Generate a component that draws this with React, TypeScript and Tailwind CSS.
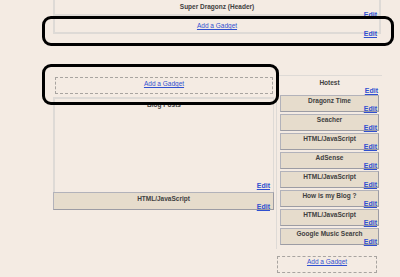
import React from "react";

const font = { fontFamily: '"Liberation Sans", Arial, sans-serif' };

function EditLink({ className = "" }: { className?: string }) {
  return (
    <span className={"text-[7px] leading-none text-[#2f4fd0] underline font-bold " + className}>Edit</span>
  );
}

function AddGadget({ className = "" }: { className?: string }) {
  return (
    <div className={"border border-dashed border-[#a8a4a0] flex justify-center " + className}>
      <span className="text-[6.5px] leading-none text-[#3050d0] underline">Add a Gadget</span>
    </div>
  );
}

function SideItem({ title }: { title: string }) {
  return (
    <div className="h-[17px] bg-[#e6dccc] border border-[#b2b2ba] border-r-[#9c9ca4] border-b-[#9c9ca4] flex flex-col items-center pt-[2px] relative">
      <span className="text-[6.5px] leading-none font-bold text-[#404040]">{title}</span>
      <div className="w-full flex justify-end pr-[1px] mt-auto">
        <EditLink />
      </div>
    </div>
  );
}

export default function App() {
  const items = [
    "Dragonz Time",
    "Seacher",
    "HTML/JavaScript",
    "AdSense",
    "HTML/JavaScript",
    "How is my Blog ?",
    "HTML/JavaScript",
    "Google Music Search",
  ];
  return (
    <div
      className="w-[400px] h-[277px] relative overflow-hidden bg-[#f4ebe3]"
      style={font}
    >
      {/* header */}
      <div className="ml-[53px] w-[328px] mt-[-2px] h-[18px] border-2 border-[#dedad6] flex flex-col items-center pt-[4px]">
        <span className="text-[6.5px] leading-none font-bold text-[#404040]">Super Dragonz (Header)</span>
        <div className="w-full flex justify-end pr-[2px] mt-auto">
          <EditLink />
        </div>
      </div>
      {/* add gadget header */}
      <div className="ml-[53px] w-[328px] mt-[1px] h-[17px] border-2 border-[#dedad6] flex flex-col items-center pt-[4px]">
        <span className="text-[6.5px] leading-none text-[#3050d0] underline">Add a Gadget</span>
        <div className="w-full flex justify-end pr-[2px] mt-auto">
          <EditLink />
        </div>
      </div>

      <div className="flex mt-[41px]">
        {/* left column */}
        <div className="ml-[53px] w-[221px] flex flex-col">
          <AddGadget className="ml-[2px] mr-[1px] mt-[2px] h-[17px] pt-[3px]" />
          <div className="mt-[3px] h-[95px] border-l-2 border-t-2 border-r border-[#dedad6] flex flex-col items-center pt-[3px]">
            <span className="text-[6.5px] leading-none font-bold text-[#404040]">Blog Posts</span>
            <div className="w-full flex justify-end pr-[3px] mt-auto pb-[3px]">
              <EditLink />
            </div>
          </div>
          <div className="h-[18px] bg-[#e6dccc] border border-[#b2b2ba] border-r-[#9c9ca4] border-b-[#9c9ca4] flex flex-col items-center pt-[3px]">
            <span className="text-[6.5px] leading-none font-bold text-[#404040]">HTML/JavaScript</span>
            <div className="w-full flex justify-end pr-[3px] mt-auto">
              <EditLink />
            </div>
          </div>
        </div>

        {/* right column */}
        <div className="w-[106px] ml-[2px] flex flex-col">
          <div className="border-l border-t border-[#dedad6] pl-[3px] pr-[3px] flex flex-col gap-[2px] pb-[4px]">
            <div className="h-[17px] flex flex-col items-center pt-[4px]">
              <span className="text-[6.5px] leading-none font-bold text-[#404040]">Hotest</span>
              <div className="w-full flex justify-end pr-[1px] mt-auto">
                <EditLink />
              </div>
            </div>
            {items.map((t, i) => (
              <SideItem key={i} title={t} />
            ))}
          </div>
          <AddGadget className="ml-[1px] mr-[5px] mt-[7px] h-[17px] pt-[2px]" />
        </div>
      </div>

      {/* annotation overlays */}
      <div className="absolute left-[42px] top-[16px] w-[352px] h-[30px] border-[3px] border-black rounded-[9px]" />
      <div className="absolute left-[42px] top-[64px] w-[237px] h-[41px] border-[3px] border-black rounded-[9px]" />
    </div>
  );
}
